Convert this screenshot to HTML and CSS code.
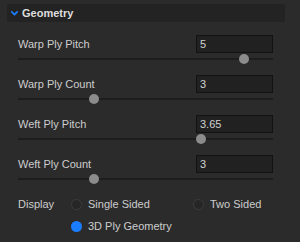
FILE: index.html
```html
<!DOCTYPE html>
<html>
<head>
<meta charset="utf-8">
<link rel="stylesheet" href="styles.css">
</head>
<body>
<div class="panel">
  <div class="header">
    <svg class="chev" width="7" height="5" viewBox="0 0 7 5"><path d="M0.8 0.8 L3.5 3.6 L6.2 0.8" fill="none" stroke="#1a7cff" stroke-width="1.7" stroke-linecap="round" stroke-linejoin="round"/></svg>
    <span class="title">Geometry</span>
  </div>
  <div class="fields">
    <div class="field">
      <div class="field-top"><span class="label">Warp Ply Pitch</span><div class="input">5</div></div>
      <div class="slider"><div class="track"></div><div class="thumb" style="--p:0.902"></div></div>
    </div>
    <div class="field">
      <div class="field-top"><span class="label">Warp Ply Count</span><div class="input">3</div></div>
      <div class="slider"><div class="track"></div><div class="thumb" style="--p:0.29"></div></div>
    </div>
    <div class="field">
      <div class="field-top"><span class="label">Weft Ply Pitch</span><div class="input">3.65</div></div>
      <div class="slider"><div class="track"></div><div class="thumb" style="--p:0.727"></div></div>
    </div>
    <div class="field">
      <div class="field-top"><span class="label">Weft Ply Count</span><div class="input">3</div></div>
      <div class="slider"><div class="track"></div><div class="thumb" style="--p:0.29"></div></div>
    </div>
    <div class="display">
      <span class="label">Display</span>
      <div class="radios">
        <div class="radio"><span class="dot"></span><span class="rtext">Single Sided</span></div>
        <div class="radio"><span class="dot"></span><span class="rtext">Two Sided</span></div>
        <div class="radio"><span class="dot on"></span><span class="rtext">3D Ply Geometry</span></div>
      </div>
    </div>
  </div>
</div>
</body>
</html>
```

FILE: styles.css
```css
html, body {
  margin: 0;
  padding: 0;
  background: #2b2b2b;
  width: 300px;
  height: 242px;
  overflow: hidden;
  font-family: "Liberation Sans", Arial, sans-serif;
}
.panel {
  padding-top: 4px;
}
.header {
  margin: 0 15px 0 7px;
  height: 18px;
  background: #232323;
  display: flex;
  align-items: center;
  padding-left: 4px;
}
.chev {
  display: block;
  margin-top: 1px;
}
.title {
  margin-left: 4px;
  font-size: 11px;
  font-weight: bold;
  color: #dedede;
}
.fields {
  padding: 13px 27px 0 18px;
  display: flex;
  flex-direction: column;
  gap: 10px;
}
.field-top {
  display: flex;
  justify-content: space-between;
  align-items: center;
  height: 18px;
}
.label {
  font-size: 11px;
  color: #cdcdcd;
}
.input {
  box-sizing: border-box;
  width: 77px;
  height: 18px;
  border: 1px solid #121212;
  background: #212121;
  color: #d2d2d2;
  font-size: 11px;
  line-height: 16px;
  padding-left: 3px;
}
.slider {
  position: relative;
  height: 12px;
}
.track {
  position: absolute;
  left: 0;
  right: 0;
  top: 5px;
  height: 2px;
  background: #1e1e1e;
}
.thumb {
  position: absolute;
  top: 1px;
  left: calc(var(--p) * (100% - 10px));
  width: 10px;
  height: 10px;
  border-radius: 50%;
  background: #8c8c8c;
}
.display {
  display: flex;
  align-items: flex-start;
}
.display > .label {
  width: 53px;
  line-height: 18px;
}
.radios {
  display: grid;
  grid-template-columns: 122px auto;
  row-gap: 4px;
}
.radio {
  display: flex;
  align-items: center;
  height: 18px;
}
.dot {
  box-sizing: border-box;
  width: 11px;
  height: 11px;
  border-radius: 50%;
  border: 1.5px solid #3d3d3d;
  background: #262626;
}
.dot.on {
  border: none;
  background: #1a7cff;
}
.rtext {
  margin-left: 6px;
  font-size: 11px;
  color: #cdcdcd;
}
```
